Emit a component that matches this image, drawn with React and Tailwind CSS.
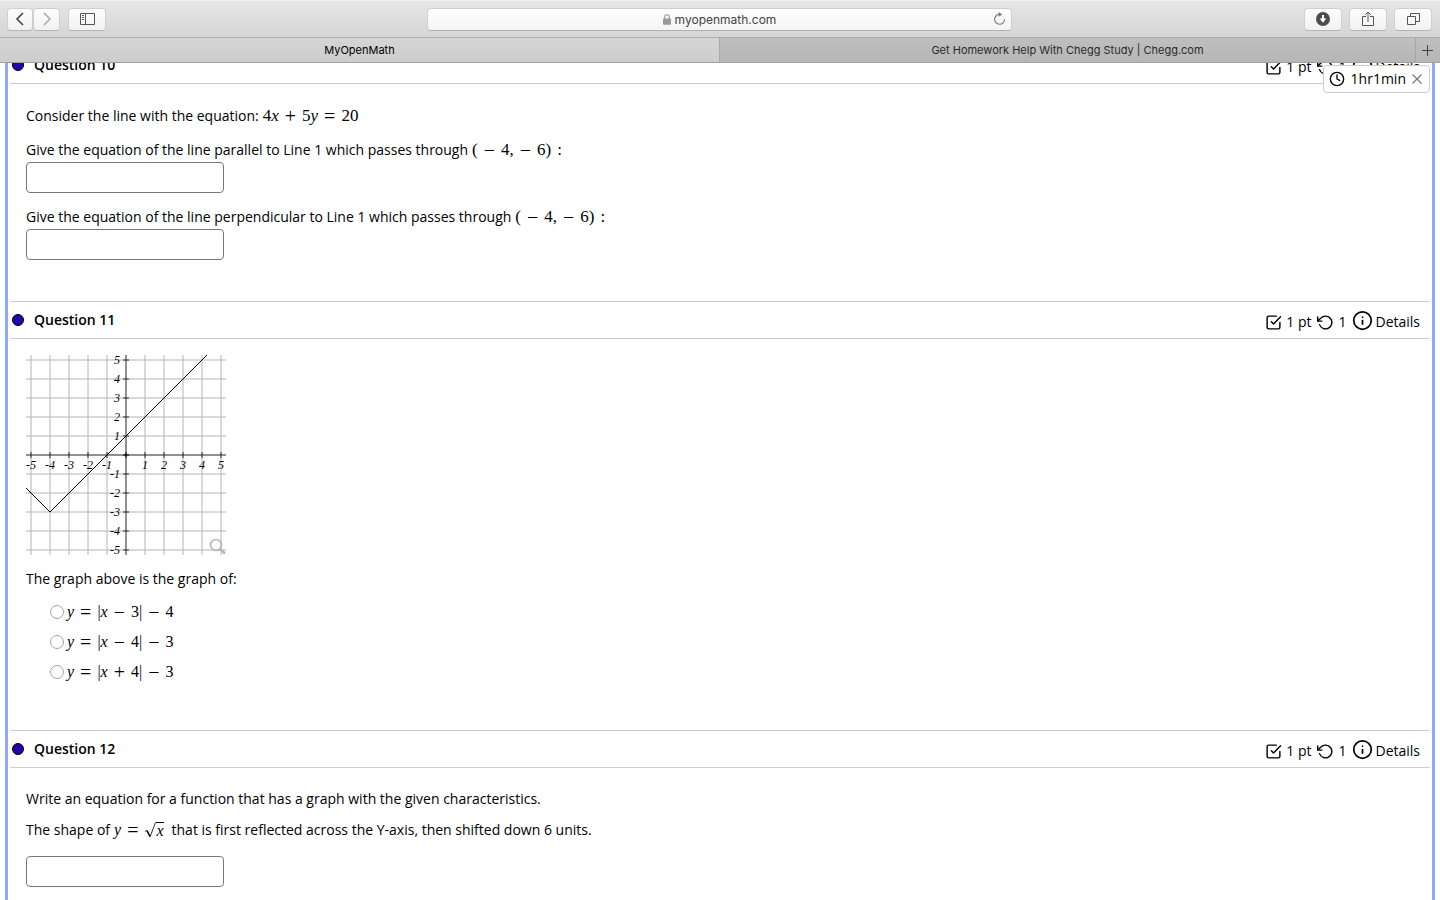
import React from 'react'
import { FiCheckSquare, FiRotateCcw, FiInfo, FiClock } from 'react-icons/fi'

const toolButton =
  'h-[23px] rounded-[4px] border border-[#cfcfcf] border-b-[#b4b4b4] bg-linear-to-b from-[#fdfdfd] to-[#f2f2f2] flex items-center justify-center text-[#555]'

function Toolbar() {
  return (
    <div className="flex items-center h-[38px] pl-[7px] pr-2 border-t border-t-[#f0f0f0] border-b border-b-[#adadad] bg-linear-to-b from-[#e6e6e6] to-[#d5d5d5]">
      <div className="flex flex-1">
        <button aria-label="Back" className={`${toolButton} w-[26px]`}>
          <svg width="10" height="14" viewBox="0 0 10 14" fill="none" stroke="#444" strokeWidth="1.6">
            <path d="M8 1L2 7l6 6" />
          </svg>
        </button>
        <button aria-label="Forward" className={`${toolButton} w-[27px]`}>
          <svg width="10" height="14" viewBox="0 0 10 14" fill="none" stroke="#aaa" strokeWidth="1.5">
            <path d="M2 1l6 6-6 6" />
          </svg>
        </button>
        <button aria-label="Sidebar" className={`${toolButton} w-[38px] ml-2`}>
          <svg width="15" height="12" viewBox="0 0 15 12" fill="none" stroke="#555">
            <path d="M.5.5h14v11H.5zM5.5.5v11" />
            <path d="M2 2.5h2M2 4.5h2M2 6.5h2" />
          </svg>
        </button>
      </div>

      {/* Address bar */}
      <div className="relative w-[585px] h-[23px] rounded-[4px] border border-[#cfcfcf] border-b-[#b0b0b0] bg-linear-to-b from-[#fdfdfd] to-[#f4f4f4] flex items-center justify-center gap-1">
        <svg width="8" height="11" viewBox="0 0 8 11" fill="none">
          <path d="M1.7 5V3a2.3 2.3 0 0 1 4.6 0v2" stroke="#999" strokeWidth="1.1" />
          <rect y="4.6" width="8" height="6.2" rx=".7" fill="#999" />
        </svg>
        <span className="pt-px font-[Inter,sans-serif] text-[12px] text-[#444]">myopenmath.com</span>
        <button aria-label="Reload" className="absolute right-[5px]">
          <svg width="13" height="14" viewBox="0 0 13 14" fill="none" stroke="#777" strokeWidth="1.1">
            <path d="M7 2.3a5 5 0 1 0 4.6 5" />
            <path d="M5.6 0l3.6 2.4-3.6 2.4z" fill="#777" stroke="none" />
          </svg>
        </button>
      </div>

      <div className="flex flex-1 justify-end gap-[7px]">
        <button aria-label="Downloads" className={`${toolButton} w-[38px]`}>
          <svg width="14" height="14" viewBox="0 0 14 14" fill="none">
            <circle cx="7" cy="7" r="7" fill="#4d4d4d" />
            <path d="M7 3v4" stroke="#fff" strokeWidth="2" />
            <path d="M3.6 6.5h6.8L7 10.7z" fill="#fff" />
          </svg>
        </button>
        <button aria-label="Share" className={`${toolButton} w-[38px]`}>
          <svg width="12" height="16" viewBox="0 0 12 16" fill="none" stroke="#555">
            <path d="M4 5.5H.5v9h11v-9H8M6 11V1M3.2 3.8L6 1l2.8 2.8" />
          </svg>
        </button>
        <button aria-label="Tabs" className={`${toolButton} w-[38px]`}>
          <svg width="13" height="12" viewBox="0 0 13 12" fill="none" stroke="#555">
            <path d="M.5 3.5h8v8h-8zM3.5 3.5v-3h9v8h-4" />
          </svg>
        </button>
      </div>
    </div>
  )
}

function TabBar() {
  return (
    <div className="flex h-[25px] border-b border-[#a0a0a0] font-[Inter,sans-serif] text-[11px] text-[#2a2a2a]">
      <button className="w-1/2 pt-px bg-linear-to-b from-[#d5d5d5] to-[#cdcdcd] border-r border-[#a9a9a9] text-black">
        MyOpenMath
      </button>
      <button className="flex-1 pt-px bg-linear-to-b from-[#bfbfbf] to-[#b6b6b6]">
        Get Homework Help With Chegg Study | Chegg.com
      </button>
      <button
        aria-label="New tab"
        className="w-[25px] pr-0.5 flex items-center justify-center bg-linear-to-b from-[#bfbfbf] to-[#b6b6b6] border-l border-[#a6a6a6]"
      >
        <svg width="11" height="11" viewBox="0 0 11 11" stroke="#444">
          <path d="M5.5 0v11M0 5.5h11" />
        </svg>
      </button>
    </div>
  )
}

// spaced run of math tokens
function MathRow({ children, className }) {
  return (
    <span
      className={`inline-flex items-center h-6 font-['Liberation_Serif',serif] leading-6 ${className}`}
    >
      {children}
    </span>
  )
}

function Op({ children }) {
  return <span className="text-[20px] leading-6">{children}</span>
}

function QuestionHeader({ number }) {
  return (
    <div className="flex items-center justify-between h-[38px] pl-0.5 pr-2.5 border-y border-[#ccc]">
      <h2 className="flex items-center gap-2.5 font-semibold">
        <span className="size-3 rounded-full border border-black bg-[#2600ad]"></span>
        Question {number}
      </h2>
      <div className="flex items-center pt-1">
        <FiCheckSquare size={17} className="mr-1" />
        1 pt
        <FiRotateCcw size={17} className="ml-1.5 mr-1" />
        1
        <button className="flex items-center gap-0.5 ml-1.5">
          <FiInfo size={21} className="-mt-1" />
          Details
        </button>
      </div>
    </div>
  )
}

function AnswerBox({ label }) {
  return (
    <input
      type="text"
      aria-label={label}
      className="block w-[198px] h-[31px] px-2 rounded-[4px] border border-[#777] bg-white"
    />
  )
}

const ticks = [-5, -4, -3, -2, -1, 1, 2, 3, 4, 5]

function Graph() {
  return (
    <svg width="200" height="200" viewBox="0 0 200 200" fill="none" stroke="#000">
      {ticks.map((t) => (
        <g key={t}>
          <path d={`M${100 + t * 19} 0v200M0 ${100 + t * 19}h200`} stroke="#b4b4b4" />
          <path d={`M${100 + t * 19} 97v6M97 ${100 + t * 19}h6`} stroke="#333" />
        </g>
      ))}
      <path d="M100 0v200M0 100h200" stroke="#222" />
      <path d="M97 100h6M100 97v6" />
      <path d="M0 133l24 24L181 0" />
      <g
        fill="#000"
        stroke="none"
        className="font-['Liberation_Serif',serif] text-[12px] italic"
      >
        {ticks.map((t) => (
          <g key={t}>
            <text x={100 + t * 19} y="114" textAnchor="middle">{t}</text>
            <text x="94" y={104 - t * 19} textAnchor="end">{t}</text>
          </g>
        ))}
      </g>
      <circle cx="190" cy="190" r="5.5" stroke="#b5b5b5" strokeWidth="1.6" />
      <path d="M194 194l5 4.5" stroke="#b5b5b5" strokeWidth="2.5" />
    </svg>
  )
}

const choices = [
  { id: 1, sign: '−', inner: 3, outer: 4 },
  { id: 2, sign: '−', inner: 4, outer: 3 },
  { id: 3, sign: '+', inner: 4, outer: 3 },
]

function PointPair() {
  return (
    <MathRow className="gap-1.5 text-[17px]">
      <span>(</span>
      <Op>−</Op>
      <span>4,</span>
      <Op>−</Op>
      <span>6)</span>
      <span>:</span>
    </MathRow>
  )
}

function App() {
  return (
    <div className="h-screen flex flex-col overflow-hidden bg-white text-black">
      <Toolbar />
      <TabBar />

      <main className="relative flex-1 min-h-0 overflow-hidden font-['Open_Sans',sans-serif] text-[14px] leading-6">
        {/* Timer */}
        <div className="absolute top-0.5 right-2.5 z-10 flex items-center h-7 px-[5px] rounded-[4px] border border-[#ccc] bg-white">
          <FiClock size={16} className="mr-1.5" />
          1hr1min
          <button aria-label="Hide timer" className="ml-1.5 mr-0.5">
            <svg width="10" height="10" viewBox="0 0 10 10" stroke="#777" strokeWidth="1.2">
              <path d="M.5.5l9 9M9.5.5l-9 9" />
            </svg>
          </button>
        </div>

        <div className="min-h-full -mt-[17px] mx-[5px] px-0.5 border-x-[3px] border-[#93a9f8]">
          <section>
            <QuestionHeader number={10} />
            <div className="px-4 pt-5 pb-[41px]">
              <p className="flex gap-1 mb-2.5">
                Consider the line with the equation:
                <MathRow className="gap-1.5 text-[17px]">
                  <span>4<i>x</i></span>
                  <Op>+</Op>
                  <span>5<i>y</i></span>
                  <Op>=</Op>
                  <span>20</span>
                </MathRow>
              </p>
              <p className="flex gap-1">
                Give the equation of the line parallel to Line 1 which passes through
                <PointPair />
              </p>
              <AnswerBox label="Parallel line" />
              <p className="flex gap-1 mt-3">
                Give the equation of the line perpendicular to Line 1 which passes through
                <PointPair />
              </p>
              <AnswerBox label="Perpendicular line" />
            </div>
          </section>

          <section>
            <QuestionHeader number={11} />
            <div className="px-4 pt-4 pb-[43px]">
              <Graph />
              <p className="mt-3 mb-1.5">The graph above is the graph of:</p>
              {choices.map((c) => (
                <label key={c.id} className="flex items-center gap-[3px] h-[30px] pl-6">
                  <input
                    type="radio"
                    name="graph"
                    className="appearance-none size-3.5 rounded-full border border-[#a5a5a5] bg-white"
                  />
                  <MathRow className="gap-1.5 text-[16px]">
                    <i>y</i>
                    <Op>=</Op>
                    <span>|<i>x</i></span>
                    <Op>{c.sign}</Op>
                    <span>{c.inner}|</span>
                    <Op>−</Op>
                    <span>{c.outer}</span>
                  </MathRow>
                </label>
              ))}
            </div>
          </section>

          <section>
            <QuestionHeader number={12} />
            <div className="px-4 pt-[19px] pb-10">
              <p>Write an equation for a function that has a graph with the given characteristics.</p>
              <p className="flex gap-1 mt-[7px] mb-3.5">
                The shape of
                <MathRow className="gap-1.5 text-[16px]">
                  <i>y</i>
                  <Op>=</Op>
                  <span className="flex items-center">
                    <svg width="12" height="16" viewBox="0 0 12 16" fill="none" stroke="#000">
                      <path d="M1 9.5l2-1.2" strokeWidth=".8" />
                      <path d="M3 8.5l3 6" strokeWidth="1.6" />
                      <path d="M6 15L11.5.5h.5" strokeWidth=".8" />
                    </svg>
                    <i className="border-t border-black leading-[15px]">x</i>
                  </span>
                </MathRow>
                <span className="ml-1">
                  that is first reflected across the Y-axis, then shifted down 6 units.
                </span>
              </p>
              <AnswerBox label="Equation" />
            </div>
          </section>
        </div>
      </main>
    </div>
  )
}

export default App
